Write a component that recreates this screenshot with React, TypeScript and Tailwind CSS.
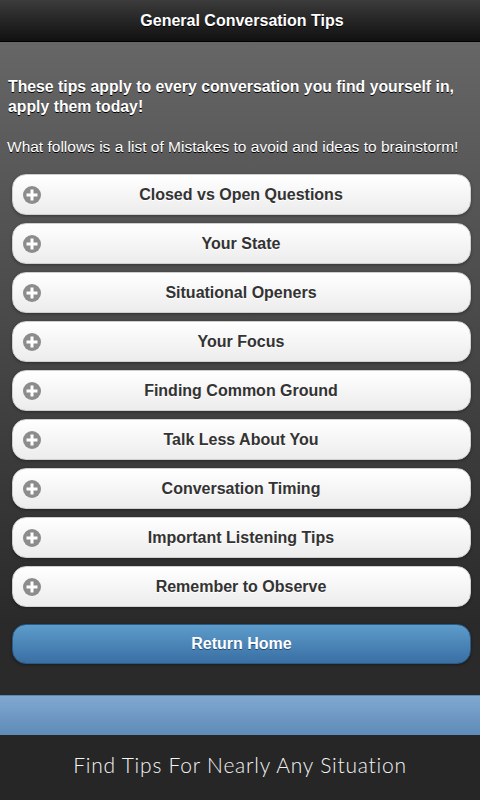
import React from "react";

const items = [
  "Closed vs Open Questions",
  "Your State",
  "Situational Openers",
  "Your Focus",
  "Finding Common Ground",
  "Talk Less About You",
  "Conversation Timing",
  "Important Listening Tips",
  "Remember to Observe",
];

function Plus() {
  return (
    <svg width="18" height="18" viewBox="0 0 18 18" className="shrink-0">
      <circle cx="9" cy="9" r="9" fill="#8c8c8c" />
      <rect x="3.5" y="7.5" width="11" height="3" fill="#fff" />
      <rect x="7.5" y="3.5" width="3" height="11" fill="#fff" />
    </svg>
  );
}

export default function App() {
  return (
    <div
      className="w-[480px] h-[800px] flex flex-col overflow-hidden bg-[#2a2a2a]"
      style={{ fontFamily: '"Liberation Sans", Arial, sans-serif' }}
    >
      <header className="h-[42px] shrink-0 flex items-center justify-center pl-[4px] bg-gradient-to-b from-[#3c3c3c] to-[#111111] border-b border-[#000]">
        <h1 className="text-white font-bold text-[16px] [text-shadow:0_1px_0_#000]">
          General Conversation Tips
        </h1>
      </header>
      <main className="flex-1 flex flex-col bg-[linear-gradient(to_bottom,#666666_0px,#2a2a2a_580px,#2a2a2a_100%)] pl-[12px] pr-[9px] pt-[35px]">
        <p className="text-white font-bold text-[15.8px] leading-[20px] -ml-[4px] [text-shadow:0_1px_0_#000]">
          These tips apply to every conversation you find yourself in, apply them today!
        </p>
        <p className="text-white text-[15.5px] leading-[20px] mt-[20px] -ml-[5px] -mr-[9px] [text-shadow:0_1px_0_#000]">
          What follows is a list of Mistakes to avoid and ideas to brainstorm!
        </p>
        <div className="flex flex-col gap-[8px] mt-[17px]">
          {items.map((t) => (
            <div
              key={t}
              className="h-[41px] rounded-[14px] border border-[#cfcfcf] bg-gradient-to-b from-[#ffffff] to-[#ececec] shadow-[0_1px_3px_rgba(0,0,0,0.35)] flex items-center pl-[10px] pr-[29px] relative"
            >
              <Plus />
              <span className="flex-1 text-center text-[#333] font-bold text-[16px] [text-shadow:0_1px_0_#fff]">
                {t}
              </span>
            </div>
          ))}
        </div>
        <div className="mt-[17px] h-[40px] rounded-[14px] border border-[#2a5b87] bg-gradient-to-b from-[#5d9ccb] to-[#3a6fa3] shadow-[0_1px_3px_rgba(0,0,0,0.4)] flex items-center justify-center">
          <span className="text-white font-bold text-[16px] [text-shadow:0_1px_0_#1d4a74]">Return Home</span>
        </div>
      </main>
      <div className="h-[40px] shrink-0 bg-gradient-to-b from-[#80a8d1] to-[#5f8bb8] border-t border-[#5a86b3]" />
      <footer className="h-[65px] shrink-0 bg-[#262626] flex items-center justify-center pb-[5px]">
        <span
          className="text-[#f4f4f4] text-[21px] tracking-[0.78px]"
          style={{ fontFamily: 'Lato, sans-serif', fontWeight: 300 }}
        >
          Find Tips For Nearly Any Situation
        </span>
      </footer>
    </div>
  );
}
